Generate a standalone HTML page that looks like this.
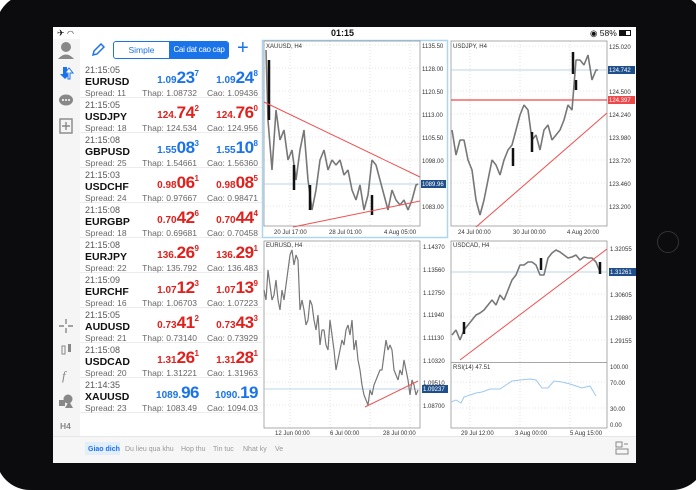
<!DOCTYPE html>
<html><head><meta charset="utf-8"><style>
*{margin:0;padding:0;box-sizing:border-box}
body{width:696px;height:484px;background:#fff;position:relative;overflow:hidden;font-family:"Liberation Sans",Arial,sans-serif}
.dev{position:absolute;left:-4px;top:-6px;width:710px;height:496px;background:#0c0c0e;border-radius:34px}
.scr{position:absolute;left:53px;top:27px;width:583px;height:436px;background:#fff;overflow:hidden}
.home{position:absolute;left:657px;top:231px;width:22px;height:22px;border-radius:50%;border:1.5px solid #333}
.abs{position:absolute}
.row{position:absolute;left:27px;width:182px;height:35px;border-bottom:1px solid #ececec}
.t{position:absolute;left:5px;top:2px;font-size:9px;color:#555}
.s{position:absolute;left:5px;top:13px;font-size:10.5px;font-weight:bold;color:#111}
.sp{position:absolute;left:5px;top:25px;font-size:8.5px;color:#666}
.p{position:absolute;top:5px;font-size:10px;text-align:right;white-space:nowrap;font-weight:bold}
.p b{font-size:17px;letter-spacing:-0.5px}
.p sup{font-size:8px;vertical-align:7px}
.l{position:absolute;top:25px;font-size:8.5px;color:#666;text-align:right;white-space:nowrap}
.bl{color:#1a73e8}.rd{color:#e0201c}
.tab{position:absolute;top:419px;font-size:7px;color:#999;white-space:nowrap}
</style></head><body>
<div class="dev"></div>
<div class="home"></div>
<div class="scr">
 <div class="abs" style="left:4px;top:1px;font-size:9px;color:#111">✈ <span style="font-size:8px">◠</span></div>
 <div class="abs" style="left:278px;top:1px;font-size:9px;font-weight:bold;color:#111">01:15</div>
 <div class="abs" style="left:537px;top:1px;font-size:8.5px;color:#111">◉ 58%</div>
 <div class="abs" style="left:566px;top:3px;width:12px;height:6px;border:1px solid #111"><div style="width:6px;height:4px;background:#111"></div></div>
 <div class="abs" style="left:0;top:12px;width:27px;height:397px;background:#f5f5f5"></div>
 <svg class="abs" style="left:0;top:12px" width="27" height="424">
  <circle cx="13" cy="8" r="5" fill="#888"/><path d="M5 20 q8-9 16 0z" fill="#888"/>
  <path d="M10 28 v7 h-3 l5 5 5-5h-3v-7z" fill="#1a73e8"/><path d="M17 40 v-6 h3 l-4-5-4 5h3v6z" fill="#fff" stroke="#1a73e8"/>
  <ellipse cx="13" cy="61" rx="7" ry="5.5" fill="#888"/><circle cx="10" cy="61" r="1" fill="#fff"/><circle cx="13" cy="61" r="1" fill="#fff"/><circle cx="16" cy="61" r="1" fill="#fff"/>
  <rect x="7" y="80" width="12" height="14" fill="none" stroke="#888" stroke-width="1.4"/><path d="M13 83v8M9 87h8" stroke="#888" stroke-width="1.4"/>
  <path d="M13 280v5M13 289v5M6 287h5M15 287h5" stroke="#888" stroke-width="1.4"/>
  <rect x="9" y="307" width="3" height="8" fill="none" stroke="#888"/><rect x="15" y="305" width="3" height="8" fill="#888"/>
  <text x="9" y="341" font-size="13" font-style="italic" fill="#888" font-family="Liberation Serif">f</text>
  <circle cx="15" cy="360" r="4.5" fill="#888"/><rect x="6" y="361" width="6" height="6" fill="#888"/><path d="M12 369l4-7 4 7z" fill="#888"/>
  <text x="7" y="390" font-size="8.5" font-weight="bold" fill="#888">H4</text>
  <path d="M13 403v13M6.5 409.5h13" stroke="#888" stroke-width="1.2"/>
 </svg>
 <svg class="abs" style="left:38px;top:16px" width="14" height="14"><path d="M2 12l1-4 7-7 3 3-7 7z" fill="none" stroke="#1a73e8" stroke-width="1.5"/></svg>
 <div class="abs" style="left:60px;top:14px;width:116px;height:18px;border:1px solid #1a73e8;border-radius:3px;overflow:hidden;font-size:8.5px">
  <div class="abs" style="left:0;top:0;width:55px;height:16px;color:#1a73e8;text-align:center;line-height:16px">Simple</div>
  <div class="abs" style="left:55px;top:0;width:60px;height:16px;background:#1a73e8;color:#fff;text-align:center;line-height:16px;font-size:8px;letter-spacing:-0.3px;white-space:nowrap">Cai dat cao cap</div>
 </div>
 <div class="abs" style="left:184px;top:10px;font-size:20px;color:#1a73e8">+</div>
 <div class="row" style="top:36px"><div class="t">21:15:05</div><div class="s">EURUSD</div><div class="sp">Spread: 11</div><div class="p bl" style="right:63px">1.09<b>23</b><sup>7</sup></div><div class="p bl" style="right:4px">1.09<b>24</b><sup>8</sup></div><div class="l" style="right:65px">Thap: 1.08732</div><div class="l" style="right:4px">Cao: 1.09436</div></div>
 <div class="row" style="top:71px"><div class="t">21:15:05</div><div class="s">USDJPY</div><div class="sp">Spread: 18</div><div class="p rd" style="right:63px">124.<b>74</b><sup>2</sup></div><div class="p rd" style="right:4px">124.<b>76</b><sup>0</sup></div><div class="l" style="right:65px">Thap: 124.534</div><div class="l" style="right:4px">Cao: 124.956</div></div>
 <div class="row" style="top:106px"><div class="t">21:15:08</div><div class="s">GBPUSD</div><div class="sp">Spread: 25</div><div class="p bl" style="right:63px">1.55<b>08</b><sup>3</sup></div><div class="p bl" style="right:4px">1.55<b>10</b><sup>8</sup></div><div class="l" style="right:65px">Thap: 1.54661</div><div class="l" style="right:4px">Cao: 1.56360</div></div>
 <div class="row" style="top:141px"><div class="t">21:15:03</div><div class="s">USDCHF</div><div class="sp">Spread: 24</div><div class="p rd" style="right:63px">0.98<b>06</b><sup>1</sup></div><div class="p rd" style="right:4px">0.98<b>08</b><sup>5</sup></div><div class="l" style="right:65px">Thap: 0.97667</div><div class="l" style="right:4px">Cao: 0.98471</div></div>
 <div class="row" style="top:176px"><div class="t">21:15:08</div><div class="s">EURGBP</div><div class="sp">Spread: 18</div><div class="p rd" style="right:63px">0.70<b>42</b><sup>6</sup></div><div class="p rd" style="right:4px">0.70<b>44</b><sup>4</sup></div><div class="l" style="right:65px">Thap: 0.69681</div><div class="l" style="right:4px">Cao: 0.70458</div></div>
 <div class="row" style="top:211px"><div class="t">21:15:08</div><div class="s">EURJPY</div><div class="sp">Spread: 22</div><div class="p rd" style="right:63px">136.<b>26</b><sup>9</sup></div><div class="p rd" style="right:4px">136.<b>29</b><sup>1</sup></div><div class="l" style="right:65px">Thap: 135.792</div><div class="l" style="right:4px">Cao: 136.483</div></div>
 <div class="row" style="top:246px"><div class="t">21:15:09</div><div class="s">EURCHF</div><div class="sp">Spread: 16</div><div class="p rd" style="right:63px">1.07<b>12</b><sup>3</sup></div><div class="p rd" style="right:4px">1.07<b>13</b><sup>9</sup></div><div class="l" style="right:65px">Thap: 1.06703</div><div class="l" style="right:4px">Cao: 1.07223</div></div>
 <div class="row" style="top:281px"><div class="t">21:15:05</div><div class="s">AUDUSD</div><div class="sp">Spread: 21</div><div class="p rd" style="right:63px">0.73<b>41</b><sup>2</sup></div><div class="p rd" style="right:4px">0.73<b>43</b><sup>3</sup></div><div class="l" style="right:65px">Thap: 0.73140</div><div class="l" style="right:4px">Cao: 0.73929</div></div>
 <div class="row" style="top:316px"><div class="t">21:15:08</div><div class="s">USDCAD</div><div class="sp">Spread: 20</div><div class="p rd" style="right:63px">1.31<b>26</b><sup>1</sup></div><div class="p rd" style="right:4px">1.31<b>28</b><sup>1</sup></div><div class="l" style="right:65px">Thap: 1.31221</div><div class="l" style="right:4px">Cao: 1.31963</div></div>
 <div class="row" style="top:351px"><div class="t">21:14:35</div><div class="s">XAUUSD</div><div class="sp">Spread: 23</div><div class="p bl" style="right:63px">1089.<b>96</b></div><div class="p bl" style="right:4px">1090.<b>19</b></div><div class="l" style="right:65px">Thap: 1083.49</div><div class="l" style="right:4px">Cao: 1094.03</div></div>
 <div class="abs" style="left:0;top:409px;width:583px;height:27px;background:#f6f6f6;border-top:1px solid #e6e6e6"></div>
 <div class="abs" style="left:32px;top:415px;width:35px;height:13px;background:#e3eefb"></div>
 <div class="tab" style="left:35px;color:#1a73e8;font-weight:bold">Giao dich</div>
 <div class="tab" style="left:72px">Du lieu qua khu</div>
 <div class="tab" style="left:128px">Hop thu</div>
 <div class="tab" style="left:160px">Tin tuc</div>
 <div class="tab" style="left:190px">Nhat ky</div>
 <div class="tab" style="left:222px">Ve</div>
 <svg class="abs" style="left:562px;top:414px" width="14" height="14"><path d="M1 1h6v5h-6zM1 8h12v5h-12zM9 3h4" fill="none" stroke="#888"/></svg>
</div>
<svg class="abs" style="left:0;top:0" width="696" height="484" font-family="Liberation Sans" font-size="6">
 <g fill="none" stroke="#ccc" stroke-dasharray="1,2" stroke-width="0.6">
  <path d="M264 45H420M264 68H420M264 91H420M264 114H420M264 137H420M264 160H420M264 206H420M290 41V226M330 41V226M370 41V226M410 41V226"/>
  <path d="M451 46H607M451 91H607M451 114H607M451 137H607M451 160H607M451 183H607M451 206H607M470 41V226M520 41V226M570 41V226"/>
  <path d="M264 246H420M264 269H420M264 292H420M264 314H420M264 337H420M264 360H420M264 382H420M264 405H420M290 241V428M330 241V428M370 241V428M410 241V428"/>
  <path d="M451 248H607M451 294H607M451 317H607M451 340H607M451 382H607M451 408H607M470 241V428M520 241V428M570 241V428"/>
 </g>
 <rect x="262.5" y="40.5" width="185" height="197" fill="none" stroke="#aad6f0" stroke-width="1.5"/>
 <rect x="264" y="41" width="156" height="185" fill="none" stroke="#888" stroke-width="0.7"/>
 <rect x="451" y="41" width="156" height="185" fill="none" stroke="#888" stroke-width="0.7"/>
 <rect x="264" y="241" width="156" height="187" fill="none" stroke="#888" stroke-width="0.7"/>
 <rect x="451" y="241" width="156" height="187" fill="none" stroke="#888" stroke-width="0.7"/>
 <path d="M451 362.5H607" stroke="#888" stroke-width="0.7"/>
 <path d="M264 184H420M451 70H607M264 389H420M451 272H607" stroke="#a9c6e0" stroke-width="0.8"/>
 <path d="M451 100H607" stroke="#f04848" stroke-width="1.2"/>
 <g fill="none" stroke="#777" stroke-width="1.6" stroke-linejoin="bevel">
  <polyline points="266,50 268,120 272,170 276,110 280,140 284,130 288,160 292,150 296,180 300,150 304,130 308,180 312,210 316,190 320,160 324,150 328,170 332,160 336,165 340,160 344,175 348,170 352,190 356,200 360,185 364,210 368,195 372,160 376,165 380,180 384,195 388,210 392,190 396,200 400,205 404,200 408,210 412,200 416,185 418,184"/>
  <polyline points="452,130 456,155 460,140 464,140 468,160 472,170 476,200 480,215 484,200 488,180 492,160 496,165 500,175 504,160 508,150 512,145 516,130 520,115 524,105 528,110 532,140 536,135 540,150 544,130 548,125 552,140 556,135 560,130 564,120 568,105 572,110 576,60 580,60 584,65 588,55 592,80 596,70 598,70"/>
  <polyline stroke-width="1.2" points="264,290 266,300 268,270 270,285 272,300 274,295 276,280 278,300 280,310 282,290 284,300 286,285 288,270 290,255 292,250 294,265 296,255 298,260 300,310 302,300 304,310 306,325 308,320 310,300 312,305 314,320 316,330 318,315 320,345 322,330 324,330 326,345 328,350 330,320 332,335 334,350 336,370 338,360 340,350 342,340 344,345 346,330 348,325 350,335 352,320 354,350 356,340 358,360 360,370 362,385 364,395 366,400 368,405 370,390 372,395 374,385 376,380 378,375 380,370 382,370 384,355 386,340 388,350 390,345 392,350 394,370 396,375 398,380 400,370 402,375 404,360 406,370 408,380 410,395 412,380 414,385 416,395 418,390"/>
  <polyline points="452,335 456,330 460,340 464,330 468,325 472,320 476,315 480,313 484,310 488,305 492,300 496,305 500,295 504,300 508,290 512,280 516,275 520,265 524,265 528,262 532,262 536,265 540,275 544,275 548,258 552,253 556,250 560,252 564,255 568,258 572,257 576,255 580,260 584,257 588,258 592,258 596,262 600,272"/>
 </g>
 <g stroke="#111" stroke-width="2.5"><path d="M269 60v60M294 165v25M310 185v25M372 195v20M532 132v20M573 52v22M576 80v10M513 148v18M600 262v12M541 258v12M464 322v12"/></g>
 <polyline fill="none" stroke="#9cc8f0" stroke-width="1" points="451,402 456,400 461,403 464,397 470,395 476,393 482,392 490,389 500,389 506,385 512,381 520,380 530,379 536,380 542,388 548,388 554,381 562,382 570,384 576,386 582,388 590,386 596,396"/>
 <g stroke="#f05050" stroke-width="1"><path d="M264 102L420 177M293 227L420 201M476 227L607 113M365 407L418 381M460 360L607 249"/></g>
 <g fill="#333">
  <text x="266" y="48">XAUUSD, H4</text><text x="453" y="48">USDJPY, H4</text><text x="266" y="247">EURUSD, H4</text><text x="453" y="247">USDCAD, H4</text><text x="453" y="369">RSI(14) 47.51</text>
  <text x="422" y="48">1135.50</text><text x="422" y="71">1128.00</text><text x="422" y="94">1120.50</text><text x="422" y="117">1113.00</text><text x="422" y="140">1105.50</text><text x="422" y="163">1098.00</text><text x="422" y="209">1083.00</text>
  <text x="609" y="49">125.020</text><text x="609" y="94">124.500</text><text x="609" y="117">124.240</text><text x="609" y="140">123.980</text><text x="609" y="163">123.720</text><text x="609" y="186">123.460</text><text x="609" y="209">123.200</text>
  <text x="423" y="249">1.14370</text><text x="423" y="272">1.13560</text><text x="423" y="295">1.12750</text><text x="423" y="317">1.11940</text><text x="423" y="340">1.11130</text><text x="423" y="363">1.10320</text><text x="423" y="385">1.09510</text><text x="423" y="408">1.08700</text>
  <text x="610" y="251">1.32055</text><text x="610" y="297">1.30605</text><text x="610" y="320">1.29880</text><text x="610" y="343">1.29155</text>
  <text x="610" y="369">100.00</text><text x="610" y="385">70.00</text><text x="610" y="411">30.00</text><text x="610" y="427">0.00</text>
  <text x="274" y="234">20 Jul 17:00</text><text x="329" y="234">28 Jul 01:00</text><text x="384" y="234">4 Aug 05:00</text>
  <text x="458" y="234">24 Jul 00:00</text><text x="513" y="234">30 Jul 00:00</text><text x="567" y="234">4 Aug 20:00</text>
  <text x="275" y="435">12 Jun 00:00</text><text x="330" y="435">6 Jul 00:00</text><text x="383" y="435">28 Jul 00:00</text>
  <text x="461" y="435">29 Jul 12:00</text><text x="515" y="435">3 Aug 00:00</text><text x="570" y="435">5 Aug 15:00</text>
 </g>
 <rect x="421" y="180" width="25" height="8" fill="#1f4f8a"/><text x="422" y="186" fill="#fff">1089.96</text>
 <rect x="608" y="66" width="27" height="8" fill="#1f4f8a"/><text x="609" y="72" fill="#fff">124.742</text>
 <rect x="608" y="96" width="27" height="8" fill="#f04848"/><text x="609" y="102" fill="#fff">124.397</text>
 <rect x="422" y="385" width="26" height="8" fill="#1f4f8a"/><text x="423" y="391" fill="#fff">1.09237</text>
 <rect x="609" y="268" width="27" height="8" fill="#1f4f8a"/><text x="610" y="274" fill="#fff">1.31261</text>
</svg>
</body></html>
